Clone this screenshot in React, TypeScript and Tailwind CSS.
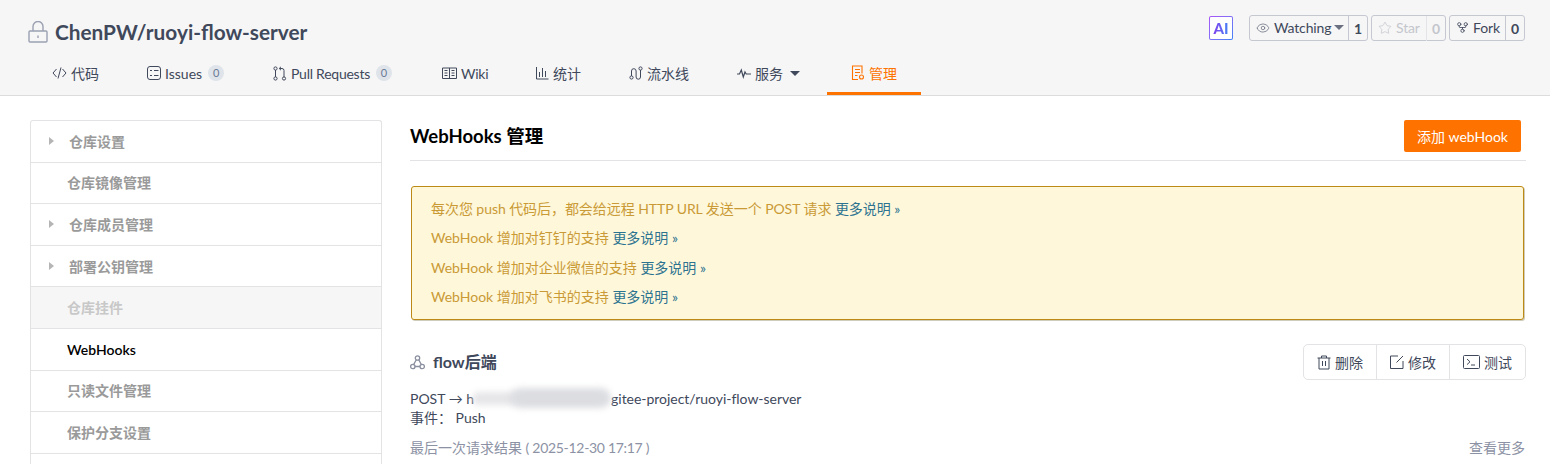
import { Eye, GitFork, Star } from 'lucide-react';
import type { ReactNode } from 'react';

const font = 'font-["Lato","Noto_Sans_CJK_SC",sans-serif]';

function CodeIcon() {
  return (
    <svg width="15" height="14" viewBox="0 0 15 14" fill="none" stroke="currentColor" strokeWidth="1">
      <path d="M4.5 3 1 7l3.5 4M10.5 3 14 7l-3.5 4M9 1.5 6 12.5" />
    </svg>
  );
}

function IssueIcon() {
  return (
    <svg width="14" height="14" viewBox="0 0 14 14" fill="none" stroke="currentColor" strokeWidth="1">
      <rect x=".5" y=".5" width="13" height="13" rx="2.5" />
      <path d="M7 4.5h4.5M7 9.5h4.5M3 4.5h2M3 9.5h2" />
    </svg>
  );
}

function PullIcon() {
  return (
    <svg width="14" height="15" viewBox="0 0 14 15" fill="none" stroke="currentColor" strokeWidth="1">
      <circle cx="2.5" cy="2.5" r="1.6" />
      <circle cx="2.5" cy="12.5" r="1.6" />
      <circle cx="11" cy="12.5" r="1.6" />
      <path d="M2.5 4v7M11 11V4.5a2 2 0 0 0-2-2H6.5M8 .8 6.2 2.5 8 4.2" />
    </svg>
  );
}

function WikiIcon() {
  return (
    <svg width="15" height="13" viewBox="0 0 15 13" fill="none" stroke="currentColor" strokeWidth="1">
      <path d="M.5 1h14v10.5H.5zM7.5 1v10.5M2.5 3.5h3M2.5 6h3M2.5 8.5h3M9.5 3.5h3M9.5 6h3M9.5 8.5h3" />
    </svg>
  );
}

function ChartIcon() {
  return (
    <svg width="13" height="14" viewBox="0 0 13 14" fill="none" stroke="currentColor" strokeWidth="1">
      <path d="M.5 1v12h12M3.5 6v5M6.5 2v9M9.5 5v6" />
    </svg>
  );
}

function PipelineIcon() {
  return (
    <svg width="14" height="15" viewBox="0 0 14 15" fill="none" stroke="currentColor" strokeWidth="1">
      <circle cx="2.5" cy="11.5" r="1.6" />
      <circle cx="11.5" cy="2.5" r="1.6" />
      <path d="M2.5 10V5a2.3 2.3 0 0 1 4.6 0v6a2.2 2.2 0 0 0 4.4 0V4" />
    </svg>
  );
}

function PulseIcon() {
  return (
    <svg width="14" height="12" viewBox="0 0 14 12" fill="none" stroke="currentColor" strokeWidth="1.2">
      <path d="M0 7h2.5l1.8-4 2 7 1.7-5 1.2 2H14" />
    </svg>
  );
}

function ManageIcon() {
  return (
    <svg width="14" height="16" viewBox="0 0 14 16" fill="none" stroke="currentColor" strokeWidth="1.1">
      <path d="M7 14.5H1.5V1h9.5v7.5" />
      <path d="M4 4.5h5M4 7.5h5M4 10.5h2.5" />
      <circle cx="10.5" cy="12" r="2" />
    </svg>
  );
}

function LockIcon() {
  return (
    <svg width="20" height="22" viewBox="0 0 20 22" fill="none" stroke="#9ba1b2" strokeWidth="1.4">
      <rect x="1" y="10" width="18" height="11" rx="1" />
      <path d="M5 10V5.5a5 5 0 0 1 10 0V10" />
      <path d="M10 14.5v2.5" />
    </svg>
  );
}

function HookIcon() {
  return (
    <svg width="15" height="15" viewBox="0 0 15 15" fill="none" stroke="#8a90a0" strokeWidth="1.3">
      <circle cx="7.5" cy="3" r="2.2" />
      <circle cx="2.8" cy="11.5" r="2.2" />
      <circle cx="12.2" cy="11.5" r="2.2" />
      <path d="M6.3 4.8 3.6 9.6M8.7 4.8l2.7 4.8M4.8 11.5h5.4" />
    </svg>
  );
}

function TrashIcon() {
  return (
    <svg width="14" height="15" viewBox="0 0 14 15" fill="none" stroke="currentColor" strokeWidth="1">
      <path d="M.5 3h13M2 3v11h10V3M4.5 3V1h5v2M5.5 6v5M8.5 6v5" />
    </svg>
  );
}

function EditIcon() {
  return (
    <svg width="14" height="14" viewBox="0 0 14 14" fill="none" stroke="currentColor" strokeWidth="1">
      <path d="M8 1H.5v12.5H13V6M6.5 7.5 13 1" />
    </svg>
  );
}

function TerminalIcon() {
  return (
    <svg width="17" height="14" viewBox="0 0 17 14" fill="none" stroke="currentColor" strokeWidth="1">
      <rect x=".5" y=".5" width="16" height="13" rx="1" />
      <path d="m4 4 3 2.8L4 9.6M8 10h4" />
    </svg>
  );
}

function AiLogo() {
  return (
    <div className="mr-[13px] h-[24px] w-[24px] rounded-[2px] bg-gradient-to-br from-[#a855f7] to-[#3b82f6] p-px">
      <div className="flex h-full w-full items-center justify-center rounded-[1px] bg-white">
        <span className="bg-gradient-to-r from-[#7c3aed] to-[#3b82f6] bg-clip-text text-[15px] font-black leading-none text-transparent">AI</span>
      </div>
    </div>
  );
}

function Caret({ className }: { className: string }) {
  return <span className={`inline-block h-0 w-0 border-x-[5px] border-t-[5px] border-x-transparent ${className}`} />;
}

const tabs: { label: string; icon: ReactNode; width: string; badge?: string; caret?: boolean; active?: boolean; tight?: boolean }[] = [
  { label: '代码', icon: <CodeIcon />, width: 'w-[95px]' },
  { label: 'Issues', icon: <IssueIcon />, width: 'w-[126px]', badge: '0' },
  { label: 'Pull Requests', icon: <PullIcon />, width: 'w-[169px]', badge: '0', tight: true },
  { label: 'Wiki', icon: <WikiIcon />, width: 'w-[94px]', tight: true },
  { label: '统计', icon: <ChartIcon />, width: 'w-[93px]' },
  { label: '流水线', icon: <PipelineIcon />, width: 'w-[108px]' },
  { label: '服务', icon: <PulseIcon />, width: 'w-[114px]', caret: true },
  { label: '管理', icon: <ManageIcon />, width: 'w-[94px]', active: true },
];

const sideItems: { label: string; arrow?: boolean; disabled?: boolean; active?: boolean }[] = [
  { label: '仓库设置', arrow: true },
  { label: '仓库镜像管理' },
  { label: '仓库成员管理', arrow: true },
  { label: '部署公钥管理', arrow: true },
  { label: '仓库挂件', disabled: true },
  { label: 'WebHooks', active: true },
  { label: '只读文件管理' },
  { label: '保护分支设置' },
  { label: '' },
];

const notices = [
  '每次您 push 代码后，都会给远程 HTTP URL 发送一个 POST 请求',
  'WebHook 增加对钉钉的支持',
  'WebHook 增加对企业微信的支持',
  'WebHook 增加对飞书的支持',
];

function CountButton({ icon, label, count, caret, muted, width }: { icon: ReactNode; label: string; count: string; caret?: boolean; muted?: boolean; width: string }) {
  return (
    <div className={`flex h-[26px] items-center rounded-[3px] border border-[#c5c7d1] pb-px text-[14px] ${width} ${muted ? 'text-[#c4c6cd]' : 'text-[#40485b]'}`}>
      <div className="flex h-full flex-1 items-center gap-[4px] pl-[6px]">
        {icon}
        <span className="tracking-[-0.15px]">{label}</span>
        {caret && <Caret className="-ml-px border-t-[#6a7080]" />}
      </div>
      <div className={`-mb-px flex h-[25px] w-[19px] items-center justify-center border-l font-bold ${muted ? 'border-[#e3e4e8]' : 'border-[#c5c7d1]'}`}>{count}</div>
    </div>
  );
}

export default function App() {
  return (
    <div className={`h-[464px] overflow-hidden bg-white text-[14px] text-[#40485b] ${font}`}>
      <header className="h-[96px] border-b border-[#dcdcdc] bg-[#f6f6f6]">
        <div className="flex h-[54px] items-start justify-between pl-[28px] pr-[25px] pt-[15px]">
          <div className="flex items-center gap-[7px] pt-[4px]">
            <LockIcon />
            <span className="text-[20.8px] font-bold leading-[26px] text-[#40485b]">ChenPW/ruoyi-flow-server</span>
          </div>
          <div className="flex items-center gap-[3px]">
            <AiLogo />
            <CountButton icon={<Eye size={14} strokeWidth={1.3} className="text-[#6a7080]" />} label="Watching" count="1" caret width="w-[119px]" />
            <CountButton icon={<Star size={14} strokeWidth={1.3} />} label="Star" count="0" muted width="w-[75px]" />
            <CountButton icon={<GitFork size={13} strokeWidth={1.5} />} label="Fork" count="0" width="w-[76px]" />
          </div>
        </div>
        <nav className="flex h-[41px] pl-[28px]">
          {tabs.map((tab) => (
            <div
              key={tab.label}
              className={`flex items-center gap-[4px] border-b-[3px] pl-[24px] ${tab.width} ${
                tab.active ? 'border-[#fe7300] text-[#fe7300]' : 'border-transparent text-[#40485b]'
              }`}
            >
              {tab.icon}
              <span className={tab.tight ? 'tracking-[-0.25px]' : ''}>{tab.label}</span>
              {tab.badge && (
                <span className="ml-[2px] flex h-[16px] w-[16px] items-center justify-center rounded-full bg-[#dfe3ea] text-[11px] text-[#6a7a95]">{tab.badge}</span>
              )}
              {tab.caret && <Caret className="ml-[3px] border-t-[#40485b]" />}
            </div>
          ))}
        </nav>
      </header>

      <div className="flex pl-[30px] pr-[24px] pt-[24px]">
        <aside className="w-[352px] shrink-0">
          <div className="rounded-t-[3px] border border-b-0 border-[#e3e3e5]">
            {sideItems.map((item) => (
              <div
                key={item.label}
                className={`flex h-[41.6px] items-center border-b border-[#e3e3e5] text-[14px] font-semibold ${
                  item.disabled ? 'bg-[#f6f6f6] text-[#c8c8c8]' : item.active ? 'text-black' : 'text-[#9a9a9a]'
                }`}
              >
                {item.arrow ? (
                  <>
                    <span className="ml-[18px] mr-[15px] inline-block h-0 w-0 border-y-[4px] border-l-[5px] border-y-transparent border-l-[#b5b5b5]" />
                    <span>{item.label}</span>
                  </>
                ) : (
                  <span className="ml-[36px]">{item.label}</span>
                )}
              </div>
            ))}
          </div>
        </aside>

        <main className="ml-[28px] min-w-0 flex-1">
          <div className="flex h-[41px] items-start justify-between border-b border-[#e3e3e5]">
            <h1 className="pt-[3px] text-[18.5px] font-bold leading-[26px] text-black">WebHooks 管理</h1>
            <button className="mr-[5px] h-[32px] w-[117px] rounded-[2px] bg-[#fe7300] text-[14px] text-white">添加 webHook</button>
          </div>

          <div className="ml-px mt-[25px] flex h-[134px] w-[1113px] flex-col justify-center gap-[9.5px] rounded-[3px] border border-[#bd8a16] bg-[#fff7da] pl-[19px] text-[14px] text-[#c99a35] shadow-[1px_1px_0_rgba(120,110,60,0.35)]">
            {notices.map((text, index) => (
              <p key={text} className={`leading-[20px] ${index === 0 ? 'tracking-[-0.06px]' : ''}`}>
                {text} <span className="text-[#2c7390]">更多说明 »</span>
              </p>
            ))}
          </div>

          <div className="mt-[24px] flex h-[36px] items-center justify-between">
            <div className="flex items-center gap-[8px]">
              <HookIcon />
              <span className="text-[16px] font-bold text-[#40485b]">flow后端</span>
            </div>
            <div className="flex h-[36px] w-[223px] rounded-[5px] border border-[#e3e3e5] text-[14px]">
              <div className="flex w-[72px] items-center justify-center gap-[4px]">
                <TrashIcon />
                删除
              </div>
              <div className="flex w-[73px] items-center justify-center gap-[4px] border-l border-[#e3e3e5]">
                <EditIcon />
                修改
              </div>
              <div className="flex flex-1 items-center justify-center gap-[4px] border-l border-[#e3e3e5]">
                <TerminalIcon />
                测试
              </div>
            </div>
          </div>

          <div className="mt-[9px] leading-[19px]">
            <div className="flex">
              <span>POST → h</span>
              <span className="relative inline-block w-[137px]">
                <span className="absolute left-[-2px] top-[3px] h-[13px] w-[46px] rounded-full bg-[#e6e6e9] blur-[3px]" />
                <span className="absolute left-[36px] top-[-1px] h-[20px] w-[101px] rounded-full bg-[#dcdde1] blur-[3px]" />
              </span>
              <span className="tracking-[-0.03px]">gitee-project/ruoyi-flow-server</span>
            </div>
            <div>事件： Push</div>
          </div>
          <div className="mt-[10px] flex justify-between pr-px text-[#8c92a4]">
            <span>
              最后一次请求结果 <span className="tracking-[-0.3px]">( 2025-12-30 17:17 )</span>
            </span>
            <span>查看更多</span>
          </div>
        </main>
      </div>
    </div>
  );
}
